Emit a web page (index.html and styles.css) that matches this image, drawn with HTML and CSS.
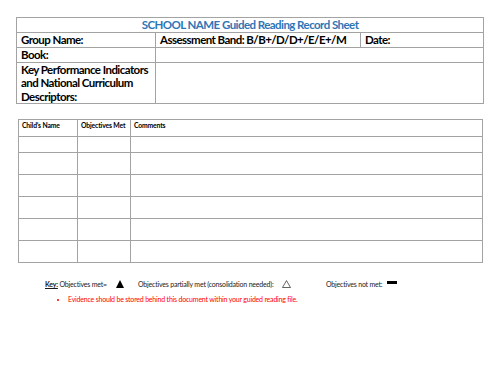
FILE: index.html
```html
<!DOCTYPE html>
<html>
<head>
<meta charset="utf-8">
<link rel="stylesheet" href="styles.css">
</head>
<body>
<div class="page">
  <table class="top">
    <colgroup><col class="c1"><col class="c2"><col class="c3"></colgroup>
    <tr class="title-row"><td colspan="3" class="title">SCHOOL NAME Guided Reading Record Sheet</td></tr>
    <tr class="r-group"><td>Group Name:</td><td>Assessment Band: B/B+/D/D+/E/E+/M</td><td>Date:</td></tr>
    <tr class="r-book"><td>Book:</td><td colspan="2"></td></tr>
    <tr class="r-kpi"><td>Key Performance Indicators and National Curriculum Descriptors:</td><td colspan="2"></td></tr>
  </table>

  <table class="record">
    <colgroup><col class="d1"><col class="d2"><col class="d3"></colgroup>
    <tr class="head"><td>Child’s Name</td><td>Objectives Met</td><td>Comments</td></tr>
    <tr class="first"><td></td><td></td><td></td></tr>
    <tr class="row"><td></td><td></td><td></td></tr>
    <tr class="row"><td></td><td></td><td></td></tr>
    <tr class="row"><td></td><td></td><td></td></tr>
    <tr class="row"><td></td><td></td><td></td></tr>
    <tr class="row"><td></td><td></td><td></td></tr>
  </table>

  <div class="key">
    <span class="k1"><u class="key-label">Key:</u> Objectives met=</span>
    <svg class="tri-fill" width="8" height="8" viewBox="0 0 8 8"><polygon points="4,0 8,8 0,8" fill="#000"/></svg>
    <span class="k2">Objectives partially met (consolidation needed):</span>
    <svg class="tri-open" width="9" height="8" viewBox="0 0 9 8"><polygon points="4.5,0.6 8.5,7.5 0.5,7.5" fill="none" stroke="#222" stroke-width="0.7"/></svg>
    <span class="k3">Objectives not met:</span>
    <span class="dash"></span>
  </div>
  <ul class="notes">
    <li>Evidence should be stored behind this document within your guided reading file.</li>
  </ul>
</div>
</body>
</html>
```
FILE: styles.css
```css
html, body {
  margin: 0;
  padding: 0;
  background: #fff;
}
.page {
  width: 500px;
  height: 386px;
  padding-top: 17px;
  box-sizing: border-box;
  font-family: Lato, "Open Sans", sans-serif;
  color: #000;
}
table {
  border-collapse: collapse;
  table-layout: fixed;
}
td {
  border: 1px solid #a3a3a3;
  padding: 0;
  vertical-align: top;
}
.top {
  margin-left: 16px;
  width: 467px;
  font-weight: bold;
  font-size: 11.5px;
  letter-spacing: -0.55px;
  line-height: 13.5px;
}
.top .c1 { width: 139px; }
.top .c2 { width: 205px; }
.top .c3 { width: 123px; }
.top td { padding-left: 4px; white-space: nowrap; }
.top .r-kpi td { white-space: normal; }
.title-row td {
  height: 14px;
  text-align: center;
  color: #2e75b6;
  padding: 0;
  line-height: 14px;
}
.r-group td { height: 14px; }
.r-book td { height: 13px; }
.r-kpi td { height: 40px; padding-right: 2px; }

.record {
  margin-left: 18px;
  margin-top: 15px;
  width: 464px;
  font-size: 6.8px;
  font-weight: bold;
  line-height: 9px;
  letter-spacing: -0.15px;
}
.record .d1 { width: 59px; }
.record .d2 { width: 53px; }
.record .d3 { width: 352px; }
.record .head td { height: 15px; padding: 1px 3px 0; }
.record .first td { height: 15px; }
.record .row td { height: 21px; }

.key {
  display: flex;
  align-items: center;
  margin-top: 16px;
  padding-left: 45px;
  font-size: 7px;
  letter-spacing: -0.2px;
  color: #1a1a1a;
  height: 10px;
  white-space: nowrap;
}
.key > * { flex: none; }
.k1 { width: 71px; }
.key-label { font-weight: bold; }
.tri-fill { margin-right: 14px; }
.k2 { width: 144px; }
.k3 { margin-left: 35px; width: 61px; }
.dash {
  display: inline-block;
  width: 10px;
  height: 3px;
  background: #000;
  margin-bottom: 3px;
}
.notes {
  margin: 6px 0 0;
  padding-left: 68px;
  font-size: 7px;
  letter-spacing: -0.2px;
  color: #ff0000;
  line-height: 9px;
}
.notes li::marker { font-size: 7px; }
```
